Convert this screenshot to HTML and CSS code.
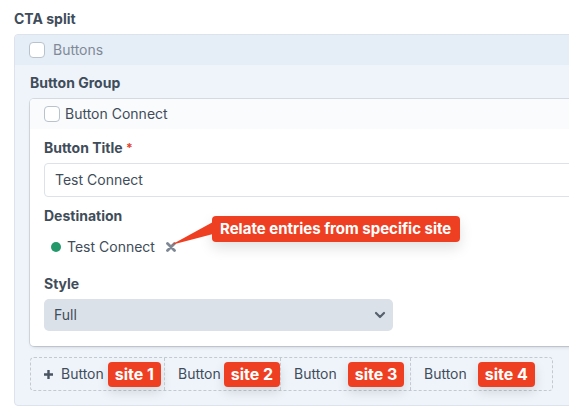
FILE: index.html
```
<!DOCTYPE html>
<html lang="en">
<head>
    <meta charset="UTF-8">
    <meta name="viewport" content="width=device-width, initial-scale=1.0">
    <title>CTA split</title>
    <link rel="stylesheet" href="styles.css">
</head>
<body>
    <div class="field-label">CTA split</div>
    <div class="matrix">
        <div class="matrix-head">
            <span class="checkbox"></span>
            <span class="muted">Buttons</span>
        </div>
        <div class="matrix-body">
            <div class="field-label">Button Group</div>
            <div class="block">
                <div class="block-head">
                    <span class="checkbox"></span>
                    <span>Button Connect</span>
                </div>
                <div class="block-body">
                    <div class="field-label">Button Title <span class="required">*</span></div>
                    <div class="text-input">Test Connect</div>

                    <div class="field-label gap-top">Destination</div>
                    <div class="chip-row">
                        <span class="status-dot"></span>
                        <span>Test Connect</span>
                        <svg class="remove" width="10" height="10" viewBox="0 0 10 10">
                            <path d="M1.5 1.5 L8.5 8.5 M8.5 1.5 L1.5 8.5" stroke="#7d8894" stroke-width="2.8" stroke-linecap="round"/>
                        </svg>
                        <div class="tip">
                            <svg class="tip-arrow" width="42" height="26" viewBox="0 0 42 26">
                                <polygon points="0,25 42,2 42,14" fill="#ef3f22"/>
                            </svg>
                            Relate entries from specific site
                        </div>
                    </div>

                    <div class="field-label style-label">Style</div>
                    <div class="select">
                        <span>Full</span>
                        <svg width="12" height="8" viewBox="0 0 12 8">
                            <path d="M2 2 L6 6 L10 2" fill="none" stroke="#56616d" stroke-width="2.2" stroke-linecap="round" stroke-linejoin="round"/>
                        </svg>
                    </div>
                </div>
            </div>

            <div class="btn-group">
                <div class="seg seg-1">
                    <svg width="9" height="9" viewBox="0 0 9 9">
                        <path d="M4.5 0 V9 M0 4.5 H9" stroke="#4a5562" stroke-width="2.4"/>
                    </svg>
                    <span class="seg-text">Button</span>
                    <span class="badge">site 1</span>
                </div>
                <div class="seg seg-2">
                    <span>Button</span>
                    <span class="badge">site 2</span>
                </div>
                <div class="seg seg-3">
                    <span>Button</span>
                    <span class="badge">site 3</span>
                </div>
                <div class="seg seg-4">
                    <span>Button</span>
                    <span class="badge">site 4</span>
                </div>
            </div>
        </div>
    </div>
</body>
</html>
```

FILE: styles.css
```
body {
    margin: 0;
    padding: 9px 0 0 14px;
    font-family: Inter, "Noto Sans", sans-serif;
    font-size: 14px;
    line-height: 20px;
    color: #3f4d5a;
    background-color: #fff;
    overflow: hidden;
}
.field-label {
    font-weight: bold;
    color: #3f4d5a;
    margin-bottom: 5px;
}
.required {
    color: #e5422b;
    font-size: 12px;
    vertical-align: 1px;
}
.checkbox {
    width: 14px;
    height: 14px;
    border: 1px solid #b9c3cd;
    border-radius: 4px;
    background-color: #fff;
    box-sizing: content-box;
}
.muted {
    color: #7f8a96;
}

/* outer matrix field */
.matrix {
    width: 640px;
    border: 1px solid #dde3ea;
    border-radius: 4px;
    background-color: #eff4fb;
}
.matrix-head {
    display: flex;
    align-items: center;
    gap: 8px;
    height: 30px;
    padding: 0 14px;
    background-color: #e5edf7;
    border-radius: 4px 4px 0 0;
}
.matrix-body {
    padding: 8px 0 14px 15px;
}
.matrix-body > .field-label {
    margin-bottom: 6px;
}

/* nested block */
.block {
    background-color: #fff;
    border-radius: 4px;
    box-shadow: 0 0 0 1px rgba(31, 41, 51, 0.12), 0 2px 4px -2px rgba(31, 41, 51, 0.3);
    margin-top: 6px;
}
.block-head {
    display: flex;
    align-items: center;
    gap: 5px;
    height: 30px;
    padding: 0 14px;
    background-color: #fafbfd;
    border-radius: 4px 4px 0 0;
}
.block-body {
    padding: 9px 14px 15px;
}
.text-input {
    height: 32px;
    line-height: 32px;
    padding: 0 10px;
    border: 1px solid #dde2e8;
    border-radius: 4px;
}
.gap-top {
    margin-top: 9px;
}
.chip-row {
    position: relative;
    display: flex;
    align-items: center;
    gap: 6px;
    height: 20px;
    margin-top: 11px;
    padding-left: 7px;
}
.status-dot {
    width: 10px;
    height: 10px;
    border-radius: 50%;
    background-color: #23996b;
}
.remove {
    margin-left: 5px;
}
.tip {
    position: absolute;
    left: 168px;
    top: -21px;
    padding: 0 9px 0 8px;
    height: 26px;
    line-height: 26px;
    background-color: #ef3f22;
    color: #fff;
    font-weight: bold;
    font-size: 15px;
    border-radius: 4px;
    box-shadow: 0 6px 14px rgba(0, 0, 0, 0.12);
    white-space: nowrap;
}
.tip-arrow {
    position: absolute;
    left: -41px;
    top: 4px;
}
.style-label {
    margin-top: 17px;
}
.select {
    display: flex;
    align-items: center;
    justify-content: space-between;
    width: 349px;
    height: 32px;
    padding: 0 7px 0 10px;
    box-sizing: border-box;
    background-color: #dbe1e8;
    border-radius: 5px;
}

/* add-block buttons */
.btn-group {
    display: flex;
    width: 523px;
    height: 34px;
    margin-top: 11px;
    border: 1px dashed #c3c9d0;
    border-radius: 4px;
    box-sizing: border-box;
}
.seg {
    display: flex;
    align-items: center;
    padding-left: 13px;
    box-sizing: border-box;
    white-space: nowrap;
}
.seg + .seg {
    border-left: 1px dashed #c3c9d0;
}
.seg-1 { width: 133px; }
.seg-2 { width: 116px; }
.seg-3 { width: 130px; }
.seg-4 { flex: 1; }
.seg-text {
    margin-left: 8px;
}
.badge {
    flex-shrink: 0;
    height: 25px;
    line-height: 25px;
    padding: 0 7px;
    background-color: #ef3f22;
    color: #fff;
    font-weight: bold;
    font-size: 16px;
    border-radius: 4px;
    box-shadow: 0 5px 12px rgba(0, 0, 0, 0.12);
    margin-left: 11px;
}
.seg-1 .badge { margin-left: 4px; }
.seg-2 .badge { margin-left: 3px; }
```
